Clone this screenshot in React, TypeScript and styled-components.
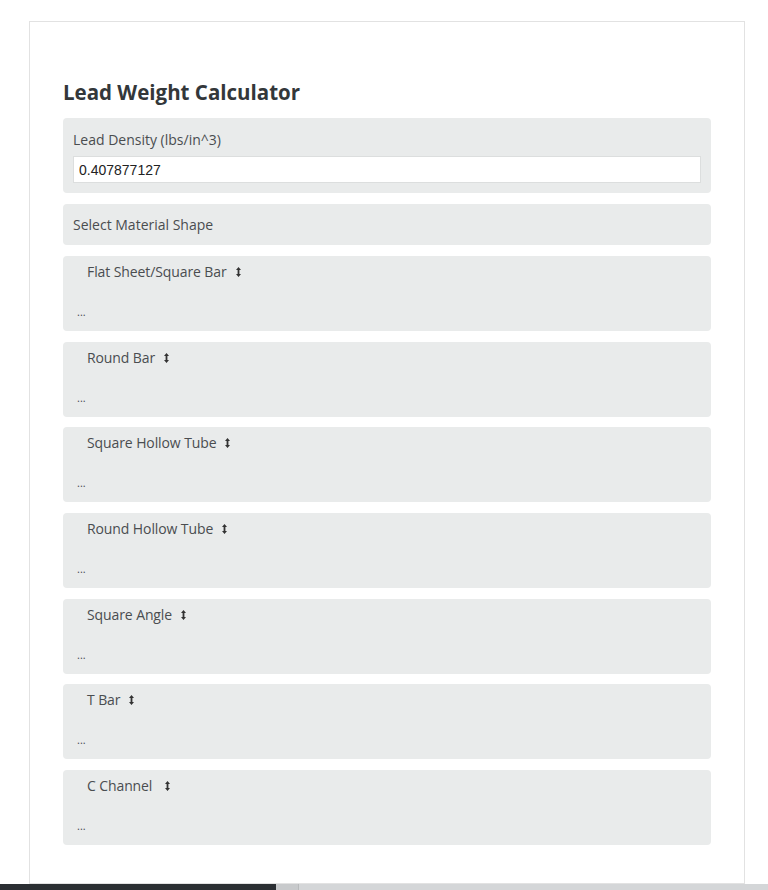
import React from 'react'
import styled, { createGlobalStyle } from 'styled-components'

const colors = {
  text: '#4a4d50',
  title: '#33373a',
  panel: '#e9ebeb',
  border: '#dcdede',
}

const GlobalStyle = createGlobalStyle`
  html, body {
    margin: 0;
    padding: 0;
    background: #fff;
  }
  body {
    font-family: 'Open Sans', 'Noto Sans', sans-serif;
    color: ${colors.text};
    height: 890px;
    overflow: hidden;
  }
`

const Page = styled.div`
  display: flex;
  flex-direction: column;
  height: 890px;
`
const Card = styled.div`
  box-sizing: border-box;
  width: 716px;
  height: 863px;
  margin: 21px 0 0 29px;
  border: 1px solid #e2e2e2;
  padding: 58px 33px 0;
  display: flex;
  flex-direction: column;
  gap: 11px;
`
const Title = styled.h2`
  margin: 0 0 3px;
  font-size: 20.5px;
  line-height: 24px;
  font-weight: 700;
  color: ${colors.title};
`
const Panel = styled.div<{ $pad?: string }>`
  background: ${colors.panel};
  border-radius: 4px;
  padding: ${(p) => p.$pad || '10px'};
  display: flex;
  flex-direction: column;
  font-size: 14px;
  line-height: 20px;
`
const ShapeList = styled.div`
  display: flex;
  flex-direction: column;
  gap: 10.67px;
`
const Label = styled.label`
  margin-bottom: 6px;
`
const Input = styled.input`
  box-sizing: border-box;
  height: 27px;
  width: 100%;
  border: 1px solid ${colors.border};
  background: #fff;
  padding: 0 5px;
  font-family: 'Liberation Sans', Arial, sans-serif;
  font-size: 14px;
  color: #222;
  outline: none;
`
const ShapeHeader = styled.div`
  display: flex;
  align-items: center;
  gap: 9px;
  padding-left: 10px;
  letter-spacing: -0.1px;
  white-space: pre;
`
const Dots = styled.div`
  margin-top: 20px;
  font-size: 11px;
  line-height: 20px;
`
const BottomBar = styled.div`
  margin-top: auto;
  height: 6px;
  display: flex;
  background: #d4d6d8;
`
const BarDark = styled.div`
  width: 276px;
  background: #2b2f33;
`
const BarThumb = styled.div`
  width: 22px;
  background: #c8cacc;
  border-right: 1px solid #b8babc;
`

const SortIcon = () => (
  <svg width="5" height="10" viewBox="0 0 5 10">
    <path d="M2.5 0 L5 3 H0 Z M2.5 10 L0 7 H5 Z" fill="#333" />
    <rect x="1.6" y="2" width="1.8" height="6" fill="#333" />
  </svg>
)

const shapes = [
  'Flat Sheet/Square Bar',
  'Round Bar',
  'Square Hollow Tube',
  'Round Hollow Tube',
  'Square Angle',
  'T Bar',
  'C Channel ',
]

export default function App(): React.ReactElement {
  return (
    <Page>
      <GlobalStyle />
      <Card>
        <Title>Lead Weight Calculator</Title>
        <Panel $pad="12px 10px 10px">
          <Label htmlFor="density">Lead Density (lbs/in^3)</Label>
          <Input id="density" defaultValue="0.407877127" />
        </Panel>
        <Panel $pad="11px 10px 10px">Select Material Shape</Panel>
        <ShapeList>
          {shapes.map((s) => (
            <Panel key={s} $pad="6px 14px 9px">
              <ShapeHeader>
                <span>{s}</span>
                <SortIcon />
              </ShapeHeader>
              <Dots>...</Dots>
            </Panel>
          ))}
        </ShapeList>
      </Card>
      <BottomBar>
        <BarDark />
        <BarThumb />
      </BottomBar>
    </Page>
  )
}
